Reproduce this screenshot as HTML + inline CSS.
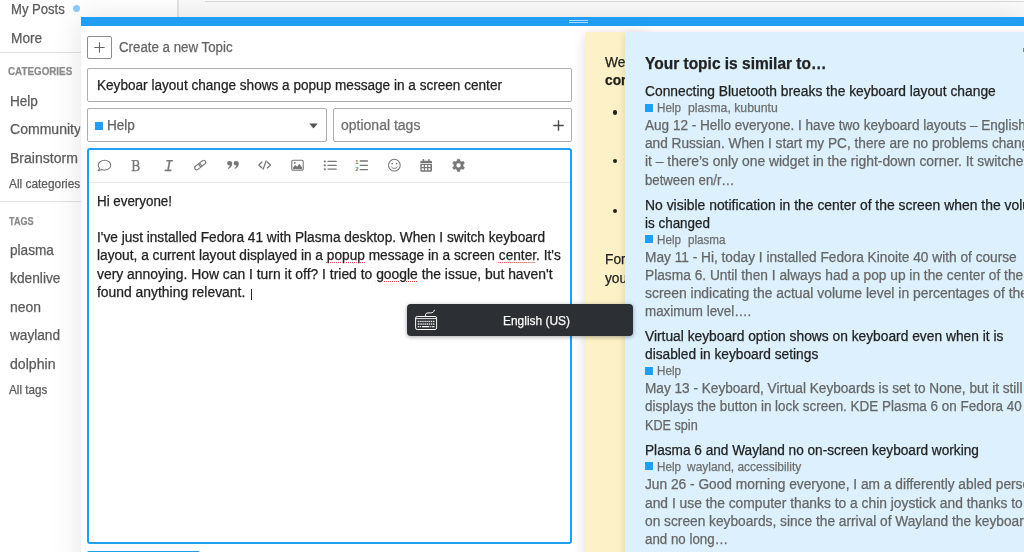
<!DOCTYPE html>
<html lang="en">
<head>
<meta charset="utf-8">
<title>Create a new Topic - KDE Discuss</title>
<style>
html,body{margin:0;padding:0;}
body{width:1024px;height:552px;overflow:hidden;position:relative;background:#fff;font-family:"Liberation Sans",sans-serif;}
.abs{position:absolute;}
.t{position:absolute;white-space:nowrap;-webkit-text-stroke:0.25px currentColor;transform-origin:0 0;line-height:normal;font-family:"Liberation Sans",sans-serif;}
.t u{text-decoration:underline dotted #e03030 1px;text-underline-offset:2px;}
#bg-main{left:178px;top:0;width:846px;height:40px;background:#fbfbfb;}
#composer{left:81px;top:17px;width:943px;height:560px;background:#fff;box-shadow:0 0 28px rgba(0,0,0,.115);}
#grip{left:81px;top:17px;width:943px;height:8.5px;background:#1f9ef4;}
.inp{box-sizing:border-box;border:1px solid #adadad;border-radius:2px;background:#fff;}
#editor{box-sizing:border-box;left:87px;top:148px;width:485px;height:395.5px;border:2px solid #1f9ef4;border-radius:3px;background:#fff;}
#yellow{left:585px;top:32px;width:60px;height:540px;background:#fdf1c8;box-shadow:0 2px 12px rgba(0,0,0,.14);}
#similar{left:625px;top:32px;width:420px;height:540px;background:#dcf0fd;box-shadow:0 2px 9px rgba(0,0,0,.13);}
#osd{left:406.5px;top:304px;width:226px;height:31.5px;border-radius:4px;background:#2c3034;box-shadow:0 1px 4px rgba(0,0,0,.35);}
.sq{position:absolute;width:8px;height:8px;background:#1f9ef4;}
.ico{position:absolute;overflow:visible;}
</style>
</head>
<body>
<!-- background page -->
<div class="abs" id="bg-main"></div>
<div class="abs" style="left:177px;top:0;width:1.5px;height:30px;background:#e4e4e4;"></div>
<div class="abs" style="left:205px;top:1px;width:819px;height:1px;background:#dcdcdc;"></div>
<div class="abs" style="left:0;top:52px;width:90px;height:1px;background:#e2e2e2;"></div>
<div class="abs" style="left:0;top:200.5px;width:90px;height:1px;background:#e2e2e2;"></div>
<div class="abs" style="left:72.5px;top:5px;width:7px;height:7px;border-radius:50%;background:#8ecbf8;"></div>

<!-- composer -->
<div class="abs" id="composer"></div>
<div class="abs" id="grip"></div>
<div class="abs" style="left:569px;top:20px;width:19px;height:1px;background:#a9d8f9;"></div>
<div class="abs" style="left:569px;top:22px;width:19px;height:1px;background:#a9d8f9;"></div>

<div class="abs inp" style="left:87px;top:36px;width:24.5px;height:22.5px;border-color:#8c8c8c;"></div>
<svg class="ico" style="left:94px;top:42px" width="11" height="11" viewBox="0 0 11 11"><path d="M5.5 0.3V10.7M0.3 5.5H10.7" stroke="#666" stroke-width="1.1" fill="none"/></svg>

<div class="abs inp" style="left:87px;top:68px;width:485px;height:34px;"></div>
<div class="abs inp" style="left:87px;top:108px;width:240px;height:33.5px;"></div>
<div class="abs inp" style="left:333px;top:108px;width:239px;height:33.5px;"></div>
<div class="sq" style="left:94.5px;top:122px;width:8px;height:8px;"></div>
<svg class="ico" style="left:308.5px;top:123px" width="9" height="6" viewBox="0 0 9 6"><path d="M0.3 0.4H8.7L4.5 5.4Z" fill="#555"/></svg>
<svg class="ico" style="left:552.5px;top:119.5px" width="11" height="11" viewBox="0 0 11 11"><path d="M5.5 0.3V10.7M0.3 5.5H10.7" stroke="#4a4a4a" stroke-width="1.4" fill="none"/></svg>

<div class="abs" id="editor"></div>
<div class="abs" style="left:89px;top:182px;width:481px;height:1px;background:#e6e6e6;"></div>
<svg class="ico" style="left:0;top:0" width="1024" height="552" viewBox="0 0 1024 552"><path d="M104.5 160.3c-3.5 0-6.3 2.2-6.3 4.9 0 1.2 0.5 2.2 1.4 3.1-0.3 0.9-0.9 1.7-1.5 2.3 1.4 0 2.7-0.5 3.6-1.2 0.9 0.4 1.8 0.6 2.8 0.6 3.5 0 6.3-2.2 6.3-4.8 0-2.7-2.8-4.9-6.3-4.9z" fill="none" stroke="#777" stroke-width="1.05" stroke-linejoin="round"/><g fill="none" stroke="#777" stroke-width="1.1" transform="rotate(-38 200.15 165.1)"><rect x="193.7" y="163.1" width="7.4" height="4" rx="2"/><rect x="199.2" y="163.1" width="7.4" height="4" rx="2"/></g><path d="M227.0 163.3a2.6 2.3 0 1 1 5.2 0.2c0 2.6-1.3 4.6-3.9 5.4l-0.5-1.1c1.2-0.5 1.9-1.3 2.1-2.4a2.5 2.3 0 0 1-2.9-2.1z" fill="#777"/><path d="M233.6 163.3a2.6 2.3 0 1 1 5.2 0.2c0 2.6-1.3 4.6-3.9 5.4l-0.5-1.1c1.2-0.5 1.9-1.3 2.1-2.4a2.5 2.3 0 0 1-2.9-2.1z" fill="#777"/><path d="M262 162.1l-3.2 2.9 3.2 2.9M267.3 162.1l3.2 2.9-3.2 2.9M266.1 160.9l-2.9 8.2" fill="none" stroke="#777" stroke-width="1.3" stroke-linecap="round" stroke-linejoin="round"/><rect x="291.8" y="160.3" width="11.4" height="10" rx="1.3" fill="none" stroke="#777" stroke-width="1.1"/><path d="M293 169.2v-1.6l2.4-2.6 1.7 1.8 2.2-3 2.8 3.6v1.8z" fill="#777"/><circle cx="294.7" cy="162.9" r="0.95" fill="#777"/><rect x="323.8" y="160.4" width="2" height="2" rx="0.6" fill="#777"/><rect x="327.4" y="160.75" width="9.4" height="1.3" rx="0.5" fill="#777"/><rect x="323.8" y="164.3" width="2" height="2" rx="0.6" fill="#777"/><rect x="327.4" y="164.65" width="9.4" height="1.3" rx="0.5" fill="#777"/><rect x="323.8" y="168.2" width="2" height="2" rx="0.6" fill="#777"/><rect x="327.4" y="168.54999999999998" width="9.4" height="1.3" rx="0.5" fill="#777"/><rect x="359.7" y="160.35" width="8.3" height="1.3" rx="0.5" fill="#777"/><rect x="359.7" y="164.65" width="8.3" height="1.3" rx="0.5" fill="#777"/><rect x="359.7" y="168.95" width="8.3" height="1.3" rx="0.5" fill="#777"/><text x="355.2" y="164.0" font-family="'Liberation Sans', sans-serif" font-weight="700" font-size="5.6" fill="#777">1</text><text x="355.2" y="170.9" font-family="'Liberation Sans', sans-serif" font-weight="700" font-size="5.6" fill="#777">2</text><circle cx="394.35" cy="165.2" r="5.85" fill="none" stroke="#777" stroke-width="1.05"/><circle cx="392.2" cy="163.6" r="0.85" fill="#777"/><circle cx="396.5" cy="163.6" r="0.85" fill="#777"/><path d="M391.3 166.9c1.6 2.1 4.5 2.1 6.1 0" fill="none" stroke="#777" stroke-width="1.0" stroke-linecap="round"/><path d="M420.3 162q0-1.3 1.3-1.3h9.1q1.3 0 1.3 1.3v0.9h-11.7zM420.3 163.8h11.7v6.7q0 1.3-1.3 1.3h-9.1q-1.3 0-1.3-1.3zM421.7 164.9v2.1h2.1v-2.1zM425.0 164.9v2.1h2.1v-2.1zM428.3 164.9v2.1h2.1v-2.1zM421.7 168.2v2.1h2.1v-2.1zM425.0 168.2v2.1h2.1v-2.1zM428.3 168.2v2.1h2.1v-2.1z" fill="#777" fill-rule="evenodd"/><rect x="422.7" y="159.1" width="1.4" height="2.4" rx="0.5" fill="#777"/><rect x="428.2" y="159.1" width="1.4" height="2.4" rx="0.5" fill="#777"/><path d="M457.04 161.01L457.43 159.15L459.67 159.15L460.06 161.01L461.56 161.87L463.36 161.28L464.48 163.22L463.07 164.49L463.07 166.21L464.48 167.48L463.36 169.42L461.56 168.83L460.06 169.69L459.67 171.55L457.43 171.55L457.04 169.69L455.54 168.83L453.74 169.42L452.62 167.48L454.03 166.21L454.03 164.49L452.62 163.22L453.74 161.28L455.54 161.87ZM456.10 165.35a2.45 2.45 0 1 0 4.9 0a2.45 2.45 0 1 0 -4.9 0Z" fill="#777" fill-rule="evenodd" stroke="#777" stroke-width="0.5" stroke-linejoin="round"/></svg>
<div class="abs" style="left:250.5px;top:288.5px;width:1px;height:11.5px;background:#222;"></div>
<div class="abs" style="left:87px;top:550.5px;width:112.5px;height:10px;background:#1f9ef4;border-radius:2px 2px 0 0;"></div>

<!-- education + similar topics panels -->
<div class="abs" id="yellow"></div>
<div class="abs" style="left:612.8px;top:110.3px;width:4.4px;height:4.4px;border-radius:50%;background:#222;"></div>
<div class="abs" style="left:612.8px;top:159.1px;width:4.4px;height:4.4px;border-radius:50%;background:#222;"></div>
<div class="abs" style="left:612.8px;top:208.6px;width:4.4px;height:4.4px;border-radius:50%;background:#222;"></div>
<div class="abs" id="similar"></div>
<div class="sq" style="left:644.8px;top:103.5px;"></div>
<div class="sq" style="left:644.8px;top:235px;"></div>
<div class="sq" style="left:644.8px;top:366.5px;"></div>
<div class="sq" style="left:644.8px;top:462.2px;"></div>
<div class="abs" style="left:1023px;top:48px;width:1px;height:4px;background:#7d868c;"></div>

<!-- keyboard layout OSD -->
<div class="abs" id="osd"></div>
<svg class="ico" style="left:0;top:0" width="1024" height="552" viewBox="0 0 1024 552"><rect x="415.6" y="316.5" width="21" height="13" rx="1.6" fill="none" stroke="#fcfcfc" stroke-width="1"/><path d="M416 318.6h20.2" stroke="#fcfcfc" stroke-width="0.9" fill="none"/><path d="M425.6 316.4v-1.4c0-1.4 0.9-2.1 2.4-2.1h2.6c2 0 3.2-0.7 3.8-2.7" stroke="#fcfcfc" stroke-width="1" fill="none" stroke-linecap="round"/><rect x="417.7" y="320.79999999999995" width="1.2" height="1.3" fill="#fcfcfc"/><rect x="419.6" y="320.79999999999995" width="1.2" height="1.3" fill="#fcfcfc"/><rect x="421.5" y="320.79999999999995" width="1.2" height="1.3" fill="#fcfcfc"/><rect x="423.4" y="320.79999999999995" width="1.2" height="1.3" fill="#fcfcfc"/><rect x="425.3" y="320.79999999999995" width="1.2" height="1.3" fill="#fcfcfc"/><rect x="427.2" y="320.79999999999995" width="1.2" height="1.3" fill="#fcfcfc"/><rect x="429.1" y="320.79999999999995" width="1.2" height="1.3" fill="#fcfcfc"/><rect x="431" y="320.79999999999995" width="1.2" height="1.3" fill="#fcfcfc"/><rect x="432.9" y="320.79999999999995" width="1.6" height="1.3" fill="#fcfcfc"/><rect x="417.7" y="323.4" width="1.8" height="1.3" fill="#fcfcfc"/><rect x="420.3" y="323.4" width="1.4" height="1.3" fill="#fcfcfc"/><rect x="422.4" y="323.4" width="1.4" height="1.3" fill="#fcfcfc"/><rect x="424.5" y="323.4" width="1.4" height="1.3" fill="#fcfcfc"/><rect x="426.6" y="323.4" width="1.4" height="1.3" fill="#fcfcfc"/><rect x="428.7" y="323.4" width="1.4" height="1.3" fill="#fcfcfc"/><rect x="430.8" y="323.4" width="1.4" height="1.3" fill="#fcfcfc"/><rect x="432.9" y="323.4" width="1.6" height="1.3" fill="#fcfcfc"/><rect x="417.7" y="326.0" width="1.4" height="1.3" fill="#fcfcfc"/><rect x="419.8" y="326.0" width="1.2" height="1.3" fill="#fcfcfc"/><rect x="421.9" y="326.0" width="7.4" height="1.3" fill="#fcfcfc"/><rect x="430.2" y="326.0" width="1.2" height="1.3" fill="#fcfcfc"/><rect x="432.2" y="326.0" width="2.3" height="1.3" fill="#fcfcfc"/></svg>

<!-- text -->
<div id="textlayer" style="position:absolute;left:0;top:0;width:1024px;height:552px;will-change:transform;">
<div class="t" style="left:10.80px;top:1.70px;font-size:13.8px;color:#5a5a5a;transform:scaleX(0.9483);">My Posts</div>
<div class="t" style="left:10.80px;top:30.70px;font-size:13.8px;color:#5a5a5a;transform:scaleX(0.9924);">More</div>
<div class="t" style="left:8.20px;top:65.00px;font-size:10.9px;color:#8a8a8a;font-weight:700;transform:scaleX(0.9016);">CATEGORIES</div>
<div class="t" style="left:10.40px;top:94.10px;font-size:13.8px;color:#5a5a5a;transform:scaleX(0.9827);">Help</div>
<div class="t" style="left:10.40px;top:122.20px;font-size:13.8px;color:#5a5a5a;transform:scaleX(1.0175);width:69.4px;overflow:hidden;">Community</div>
<div class="t" style="left:10.40px;top:150.60px;font-size:13.8px;color:#5a5a5a;transform:scaleX(1.0179);">Brainstorm</div>
<div class="t" style="left:9.10px;top:177.00px;font-size:12.6px;color:#5a5a5a;transform:scaleX(0.9430);width:76.2px;overflow:hidden;">All categories</div>
<div class="t" style="left:8.70px;top:214.80px;font-size:10.9px;color:#8a8a8a;font-weight:700;transform:scaleX(0.8352);">TAGS</div>
<div class="t" style="left:10.40px;top:242.80px;font-size:13.8px;color:#5a5a5a;transform:scaleX(0.9869);">plasma</div>
<div class="t" style="left:10.40px;top:271.20px;font-size:13.8px;color:#5a5a5a;transform:scaleX(0.9975);">kdenlive</div>
<div class="t" style="left:10.40px;top:300.00px;font-size:13.8px;color:#5a5a5a;transform:scaleX(1.0064);">neon</div>
<div class="t" style="left:10.40px;top:328.40px;font-size:13.8px;color:#5a5a5a;transform:scaleX(0.9877);">wayland</div>
<div class="t" style="left:10.40px;top:357.00px;font-size:13.8px;color:#5a5a5a;transform:scaleX(1.0247);">dolphin</div>
<div class="t" style="left:9.10px;top:383.30px;font-size:12.6px;color:#5a5a5a;transform:scaleX(0.9271);">All tags</div>
<div class="t" style="left:118.60px;top:39.80px;font-size:13.8px;color:#646464;transform:scaleX(0.9639);">Create a new Topic</div>
<div class="t" style="left:97.00px;top:78.00px;font-size:13.8px;color:#222;transform:scaleX(0.9851);">Keyboar layout change shows a popup message in a screen center</div>
<div class="t" style="left:106.90px;top:118.30px;font-size:13.8px;color:#646464;transform:scaleX(0.9827);">Help</div>
<div class="t" style="left:340.60px;top:117.70px;font-size:13.8px;color:#6e6e6e;transform:scaleX(1.0147);">optional tags</div>
<div class="t" style="left:97.00px;top:194.00px;font-size:13.8px;color:#222;transform:scaleX(0.9683);">Hi everyone!</div>
<div class="t" style="left:97.00px;top:230.00px;font-size:13.8px;color:#222;transform:scaleX(0.9911);">I've just installed Fedora 41 with Plasma desktop. When I switch keyboard</div>
<div class="t" style="left:97.00px;top:248.30px;font-size:13.8px;color:#222;transform:scaleX(0.9921);">layout, a current layout displayed in a <u>popup</u> message in a screen <u>center</u>. It's</div>
<div class="t" style="left:97.00px;top:266.50px;font-size:13.8px;color:#222;transform:scaleX(1.0064);">very annoying. How can I turn it off? I tried to <u>google</u> the issue, but haven't</div>
<div class="t" style="left:97.00px;top:284.75px;font-size:13.8px;color:#222;transform:scaleX(1.0066);">found anything relevant.</div>
<div class="t" style="left:502.75px;top:313.25px;font-size:13.0px;color:#fcfcfc;transform:scaleX(0.9182);">English (US)</div>
<div class="t" style="left:604.75px;top:55.00px;font-size:13.8px;color:#222;transform:scaleX(0.9950);width:20.3px;overflow:hidden;">Welcome</div>
<div class="t" style="left:604.75px;top:73.25px;font-size:13.8px;color:#222;font-weight:700;transform:scaleX(0.9950);width:20.3px;overflow:hidden;">constructive</div>
<div class="t" style="left:604.75px;top:252.25px;font-size:13.8px;color:#222;transform:scaleX(0.9950);width:20.3px;overflow:hidden;">For more</div>
<div class="t" style="left:604.75px;top:270.50px;font-size:13.8px;color:#222;transform:scaleX(0.9950);width:20.3px;overflow:hidden;">your</div>
<div class="t" style="left:645.00px;top:54.00px;font-size:16.1px;color:#222;font-weight:700;transform:scaleX(0.9634);">Your topic is similar to…</div>
<div class="t" style="left:645.00px;top:84.00px;font-size:13.8px;color:#222;transform:scaleX(1.0006);">Connecting Bluetooth breaks the keyboard layout change</div>
<div class="t" style="left:656.50px;top:101.00px;font-size:12.6px;color:#6e6e6e;transform:scaleX(0.9264);">Help</div>
<div class="t" style="left:687.75px;top:101.00px;font-size:12.6px;color:#6e6e6e;transform:scaleX(0.9711);">plasma, kubuntu</div>
<div class="t" style="left:645.00px;top:118.00px;font-size:13.8px;color:#666;transform:scaleX(0.9830);width:385.6px;overflow:hidden;">Aug 12 - Hello everyone. I have two keyboard layouts – English</div>
<div class="t" style="left:645.00px;top:136.00px;font-size:13.8px;color:#666;transform:scaleX(0.9900);width:382.8px;overflow:hidden;">and Russian. When I start my PC, there are no problems changing</div>
<div class="t" style="left:645.00px;top:154.25px;font-size:13.8px;color:#666;transform:scaleX(1.0060);width:376.7px;overflow:hidden;">it – there’s only one widget in the right-down corner. It switches</div>
<div class="t" style="left:645.00px;top:172.50px;font-size:13.8px;color:#666;transform:scaleX(0.9564);">between en/r…</div>
<div class="t" style="left:645.00px;top:197.50px;font-size:13.8px;color:#222;transform:scaleX(1.0080);width:376.0px;overflow:hidden;">No visible notification in the center of the screen when the volume</div>
<div class="t" style="left:645.00px;top:215.50px;font-size:13.8px;color:#222;transform:scaleX(0.9740);">is changed</div>
<div class="t" style="left:656.50px;top:232.50px;font-size:12.6px;color:#6e6e6e;transform:scaleX(0.9264);">Help</div>
<div class="t" style="left:688.00px;top:232.50px;font-size:12.6px;color:#6e6e6e;transform:scaleX(0.9234);">plasma</div>
<div class="t" style="left:645.00px;top:249.75px;font-size:13.8px;color:#666;transform:scaleX(0.9919);">May 11 - Hi, today I installed Fedora Kinoite 40 with of course</div>
<div class="t" style="left:645.00px;top:268.00px;font-size:13.8px;color:#666;transform:scaleX(0.9962);width:380.5px;overflow:hidden;">Plasma 6. Until then I always had a pop up in the center of the</div>
<div class="t" style="left:645.00px;top:286.00px;font-size:13.8px;color:#666;transform:scaleX(1.0070);width:376.4px;overflow:hidden;">screen indicating the actual volume level in percentages of the</div>
<div class="t" style="left:645.00px;top:304.25px;font-size:13.8px;color:#666;transform:scaleX(0.9691);">maximum level….</div>
<div class="t" style="left:645.00px;top:328.75px;font-size:13.8px;color:#222;transform:scaleX(0.9992);">Virtual keyboard option shows on keyboard even when it is</div>
<div class="t" style="left:645.00px;top:347.00px;font-size:13.8px;color:#222;transform:scaleX(0.9951);">disabled in keyboard setings</div>
<div class="t" style="left:656.50px;top:364.00px;font-size:12.6px;color:#6e6e6e;transform:scaleX(0.9264);">Help</div>
<div class="t" style="left:645.00px;top:381.00px;font-size:13.8px;color:#666;transform:scaleX(0.9869);width:384.0px;overflow:hidden;">May 13 - Keyboard, Virtual Keyboards is set to None, but it still</div>
<div class="t" style="left:645.00px;top:399.25px;font-size:13.8px;color:#666;transform:scaleX(0.9748);width:388.8px;overflow:hidden;">displays the button in lock screen. KDE Plasma 6 on Fedora 40</div>
<div class="t" style="left:645.00px;top:417.60px;font-size:13.8px;color:#666;transform:scaleX(0.9163);">KDE spin</div>
<div class="t" style="left:645.00px;top:442.50px;font-size:13.8px;color:#222;transform:scaleX(0.9887);">Plasma 6 and Wayland no on-screen keyboard working</div>
<div class="t" style="left:656.50px;top:459.70px;font-size:12.6px;color:#6e6e6e;transform:scaleX(0.9264);">Help</div>
<div class="t" style="left:687.40px;top:459.70px;font-size:12.6px;color:#6e6e6e;transform:scaleX(0.9485);">wayland, accessibility</div>
<div class="t" style="left:645.00px;top:477.20px;font-size:13.8px;color:#666;transform:scaleX(0.9950);width:380.9px;overflow:hidden;">Jun 26 - Good morning everyone, I am a differently abled person</div>
<div class="t" style="left:645.00px;top:495.50px;font-size:13.8px;color:#666;transform:scaleX(1.0012);width:378.5px;overflow:hidden;">and I use the computer thanks to a chin joystick and thanks to</div>
<div class="t" style="left:645.00px;top:513.80px;font-size:13.8px;color:#666;transform:scaleX(0.9950);width:380.9px;overflow:hidden;">on screen keyboards, since the arrival of Wayland the keyboard</div>
<div class="t" style="left:645.00px;top:531.80px;font-size:13.8px;color:#666;transform:scaleX(0.9660);">and no long…</div>
<div class="t" style="left:131.40px;top:156.75px;font-size:14.8px;color:#777;transform:scaleX(0.8644);font-family:'DejaVu Serif','Liberation Serif',serif;">B</div>
<div class="t" style="left:163.90px;top:157.75px;font-size:15.6px;color:#777;transform:scaleX(1.0043);font-family:'Liberation Mono',monospace;font-style:italic;">I</div>
</div>
</body>
</html>
